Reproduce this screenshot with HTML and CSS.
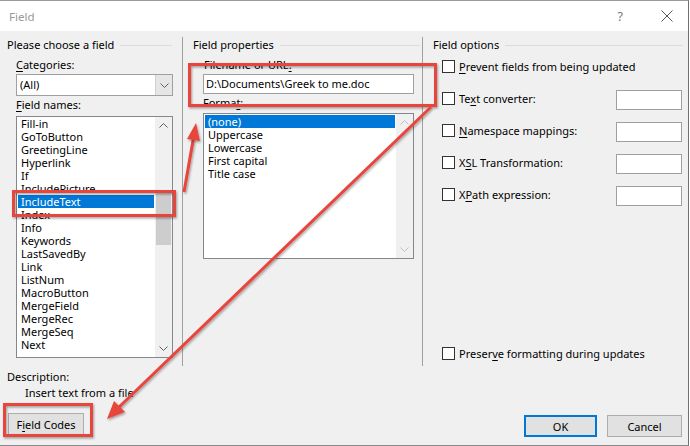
FILE: index.html
```html
<!DOCTYPE html>
<html>
<head>
<meta charset="utf-8">
<link rel="stylesheet" href="styles.css">
</head>
<body>
<div class="window">
  <div class="titlebar">
    <span class="title">Field</span>
    <span class="help">?</span>
    <svg class="close" width="12" height="12" viewBox="0 0 12 12"><path d="M0.5 0.5 L11.5 11.5 M11.5 0.5 L0.5 11.5" stroke="#555" stroke-width="1" fill="none"/></svg>
  </div>
  <div class="main">
    <div class="panels">
      <div class="col col-left">
        <div class="group-title">Please choose a field</div>
        <div class="label lbl-cat"><u>C</u>ategories:</div>
        <div class="select">
          <span class="select-value">(All)</span>
          <span class="select-btn"><svg width="9" height="5" viewBox="0 0 9 5"><path d="M0.5 0.5 L4.5 4.5 L8.5 0.5" stroke="#606060" fill="none"/></svg></span>
        </div>
        <div class="label lbl-names"><u>F</u>ield names:</div>
        <div class="listbox names">
          <div class="items">
            <div class="item">Fill-in</div>
            <div class="item">GoToButton</div>
            <div class="item">GreetingLine</div>
            <div class="item">Hyperlink</div>
            <div class="item">If</div>
            <div class="item">IncludePicture</div>
            <div class="item selected">IncludeText</div>
            <div class="item">Index</div>
            <div class="item">Info</div>
            <div class="item">Keywords</div>
            <div class="item">LastSavedBy</div>
            <div class="item">Link</div>
            <div class="item">ListNum</div>
            <div class="item">MacroButton</div>
            <div class="item">MergeField</div>
            <div class="item">MergeRec</div>
            <div class="item">MergeSeq</div>
            <div class="item">Next</div>
          </div>
          <div class="scrollbar">
            <svg class="arrow" width="9" height="5" viewBox="0 0 9 5"><path d="M0.5 4.5 L4.5 0.5 L8.5 4.5" stroke="#606060" fill="none"/></svg>
            <div class="track"><div class="thumb"></div></div>
            <svg class="arrow" width="9" height="5" viewBox="0 0 9 5"><path d="M0.5 0.5 L4.5 4.5 L8.5 0.5" stroke="#606060" fill="none"/></svg>
          </div>
        </div>
      </div>
      <div class="col col-mid">
        <div class="group-title">Field properties</div>
        <div class="label lbl-file">Filename or URL<u>:</u></div>
        <div class="textbox">D:\Documents\Greek to me.doc</div>
        <div class="label lbl-format">Forma<u>t</u>:</div>
        <div class="listbox formats">
          <div class="items">
            <div class="item selected">(none)</div>
            <div class="item">Uppercase</div>
            <div class="item">Lowercase</div>
            <div class="item">First capital</div>
            <div class="item">Title case</div>
          </div>
          <div class="scrollbar disabled">
            <svg class="arrow" width="9" height="5" viewBox="0 0 9 5"><path d="M0.5 4.5 L4.5 0.5 L8.5 4.5" stroke="#c0c0c0" fill="none"/></svg>
            <div class="track"></div>
            <svg class="arrow" width="9" height="5" viewBox="0 0 9 5"><path d="M0.5 0.5 L4.5 4.5 L8.5 0.5" stroke="#c0c0c0" fill="none"/></svg>
          </div>
        </div>
      </div>
      <div class="col col-right">
        <div class="group-title">Field options</div>
        <div class="options">
          <div class="opt"><span class="check"></span><span class="opt-label"><u>P</u>revent fields from being updated</span></div>
          <div class="opt"><span class="check"></span><span class="opt-label">Te<u>x</u>t converter:</span><span class="smallbox"></span></div>
          <div class="opt"><span class="check"></span><span class="opt-label"><u>N</u>amespace mappings:</span><span class="smallbox"></span></div>
          <div class="opt"><span class="check"></span><span class="opt-label">X<u>S</u>L Transformation:</span><span class="smallbox"></span></div>
          <div class="opt"><span class="check"></span><span class="opt-label">X<u>P</u>ath expression:</span><span class="smallbox"></span></div>
        </div>
        <div class="opt preserve"><span class="check"></span><span class="opt-label">Preser<u>v</u>e formatting during updates</span></div>
      </div>
    </div>
    <div class="desc">
      <div class="desc-label">Description:</div>
      <div class="desc-text">Insert text from a file</div>
    </div>
    <div class="buttons">
      <div class="btn btn-codes">F<u>i</u>eld Codes</div>
      <div class="btn btn-ok">OK</div>
      <div class="btn btn-cancel">Cancel</div>
    </div>
  </div>
  <svg class="annot" width="690" height="446" viewBox="0 0 690 446">
    <defs>
      <filter id="sh" x="-10%" y="-10%" width="120%" height="120%">
        <feDropShadow dx="1" dy="1.5" stdDeviation="1.2" flood-color="#000" flood-opacity="0.35"/>
      </filter>
    </defs>
    <g filter="url(#sh)" stroke="#e8453d" fill="none" stroke-width="3">
      <rect x="189.5" y="64.5" width="246" height="41"/>
      <rect x="13.5" y="191.5" width="161" height="24"/>
      <rect x="4.5" y="404.5" width="87" height="31"/>
      <line x1="184" y1="192" x2="193.5" y2="138"/>
      <line x1="431" y1="107" x2="118" y2="408"/>
    </g>
    <g filter="url(#sh)" fill="#e8453d">
      <polygon points="196,123 200,141 187,139"/>
      <polygon points="107,419 125,412 114,401"/>
    </g>
  </svg>
</div>
</body>
</html>
```

FILE: styles.css
```css
* { box-sizing: border-box; }
html, body { margin: 0; padding: 0; background: #ffffff; }
body {
  font-family: "Noto Sans", "Open Sans", sans-serif;
  font-size: 11px;
  color: #000;
}
u { text-decoration: underline; text-underline-offset: 2px; }

.window {
  position: relative;
  width: 689px;
  height: 446px;
  border-top: 1px solid #9a9a9a;
  border-right: 1px solid #707070;
  border-bottom: 1px solid #8a8a8a;
  background: #f0f0f0;
  display: flex;
  flex-direction: column;
}

.titlebar {
  height: 30px;
  background: #fff;
  display: flex;
  align-items: center;
  padding-left: 9px;
}
.title { color: #999; font-size: 11.5px; flex: 1; }
.help { color: #777; font-size: 12.5px; margin-right: 38px; }
.close { margin-right: 15px; }

.main { flex: 1; display: flex; flex-direction: column; }

.panels {
  display: flex;
  margin-top: 6px;
  height: 329px;
}
.col { display: flex; flex-direction: column; }
.col-left { width: 183px; border-right: 1px solid #a0a0a0; padding-left: 7px; }
.col-mid { width: 240px; border-right: 1px solid #a0a0a0; padding-left: 10px; }
.col-right { flex: 1; padding-left: 10px; }

.group-title {
  display: flex;
  align-items: center;
  line-height: 16px;
  height: 16px;
  white-space: nowrap;
}
.group-title::after {
  content: "";
  flex: 1;
  height: 0;
  border-top: 1px solid #dcdcdc;
  margin-left: 6px;
}
.col-left .group-title::after { margin-right: 10px; }
.col-mid .group-title::after { margin-right: 2px; }
.col-right .group-title::after { margin-right: 5px; }

.label { line-height: 16px; height: 16px; }
.lbl-cat { margin-top: 4px; padding-left: 9px; }
.lbl-names { margin-top: 1px; padding-left: 9px; }
.lbl-file { margin-top: 4px; padding-left: 11px; }
.lbl-format { margin-top: 1px; padding-left: 10px; }

.select {
  margin-top: 1px;
  margin-left: 9px;
  width: 157px;
  height: 22px;
  border: 1px solid #a0a0a0;
  background: #fff;
  display: flex;
  align-items: stretch;
}
.select-value { flex: 1; line-height: 20px; padding-left: 3px; }
.select-btn {
  width: 17px;
  background: #e6e6e6;
  border-left: 1px solid #d0d0d0;
  display: flex;
  align-items: center;
  justify-content: center;
}

.listbox {
  background: #fff;
  border: 1px solid #828790;
  display: flex;
}
.listbox .items { flex: 1; padding: 0 1px; }
.item { height: 13px; line-height: 13px; padding-left: 3px; white-space: nowrap; }
.item.selected { background: #0078d7; color: #fff; }

.names { margin-top: 3px; margin-left: 9px; width: 157px; height: 242px; }
.names .items { padding-top: 0; }

.formats { margin-top: 2px; margin-left: 10px; width: 211px; height: 146px; }
.formats .items { padding-top: 1px; }

.scrollbar {
  width: 17px;
  background: #f0f0f0;
  display: flex;
  flex-direction: column;
  align-items: center;
}
.scrollbar .arrow { margin: 6px 0; flex: none; }
.scrollbar .track { flex: 1; width: 100%; position: relative; }
.names .thumb {
  position: absolute;
  left: 1px;
  right: 1px;
  top: 59px;
  height: 52px;
  background: #cdcdcd;
}

.textbox {
  margin-top: 1px;
  margin-left: 10px;
  width: 211px;
  height: 20px;
  border: 1px solid #a0a0a0;
  background: #fff;
  line-height: 18px;
  padding-left: 2px;
  white-space: nowrap;
}

.options {
  margin-top: 3px;
  display: flex;
  flex-direction: column;
  gap: 12px;
}
.opt {
  display: flex;
  align-items: center;
  height: 20px;
  padding-left: 9px;
}
.check {
  width: 13px;
  height: 13px;
  border: 1px solid #333;
  background: #fff;
  flex: none;
}
.opt-label { margin-left: 4px; flex: 1; white-space: nowrap; }
.smallbox {
  width: 66px;
  height: 20px;
  border: 1px solid #a0a0a0;
  background: #fff;
  margin-right: 6px;
  margin-top: 3px;
}
.preserve { margin-top: auto; margin-bottom: 3px; }

.desc { padding-left: 7px; margin-top: 3px; }
.desc-label { line-height: 16px; }
.desc-text { line-height: 16px; padding-left: 18px; }

.buttons {
  display: flex;
  align-items: flex-start;
  margin-top: 12px;
  padding-left: 8px;
}
.btn {
  height: 22px;
  background: #e1e1e1;
  border: 1px solid #adadad;
  display: flex;
  align-items: center;
  justify-content: center;
}
.btn-codes { width: 76px; }
.btn-ok { width: 73px; margin-left: auto; margin-top: 2px; border: 2px solid #0078d7; }
.btn-cancel { width: 75px; margin-left: 10px; margin-right: 6px; margin-top: 2px; }

.annot { position: absolute; left: 0; top: -1px; pointer-events: none; }
```
